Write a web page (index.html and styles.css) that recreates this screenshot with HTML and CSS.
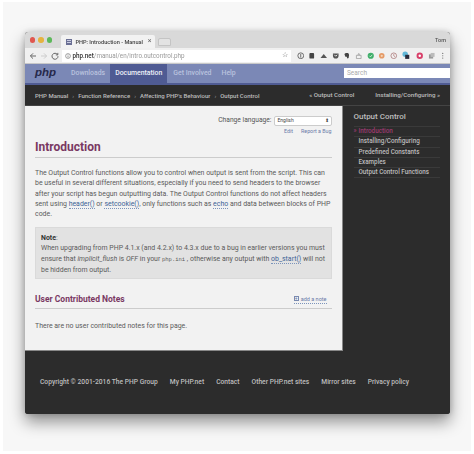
FILE: index.html
```html
<!DOCTYPE html>
<html lang="en">
<head>
<meta charset="utf-8">
<title>PHP: Introduction - Manual</title>
<link rel="stylesheet" href="styles.css">
</head>
<body>
<div class="window">
  <div class="titlebar">
    <div class="lights"><span class="light red"></span><span class="light amber"></span><span class="light green"></span></div>
    <div class="tab">
      <svg class="favicon" viewBox="0 0 6 6"><rect width="6" height="6" fill="#6a6f94"/><rect x="1" y="1" width="4" height="1" fill="#c9cce0"/><rect x="1" y="3" width="4" height="1" fill="#c9cce0"/></svg>
      <span class="tab-title">PHP: Introduction - Manual</span>
      <span class="tab-close">×</span>
    </div>
    <div class="newtab"></div>
    <span class="user">Tom</span>
  </div>
  <div class="toolbar">
    <svg class="nav-ico" viewBox="0 0 8 8"><path d="M7 4H1.5M4 1.4 1.4 4 4 6.6" fill="none" stroke="#666" stroke-width="1"/></svg>
    <svg class="nav-ico" viewBox="0 0 8 8"><path d="M1 4h5.5M4 1.4 6.6 4 4 6.6" fill="none" stroke="#ccc" stroke-width="1"/></svg>
    <svg class="nav-ico" viewBox="0 0 8 8"><path d="M6.5 2.6A3 3 0 1 0 7 4.2M6.8 .9v2H4.8" fill="none" stroke="#666" stroke-width="1"/></svg>
    <div class="address">
      <svg class="info" viewBox="0 0 8 8"><circle cx="4" cy="4" r="3.2" fill="none" stroke="#666" stroke-width=".8"/><path d="M4 3.4v2.6M4 2v.8" stroke="#666" stroke-width=".9"/></svg>
      <span class="url"><b>php.net</b>/manual/en/intro.outcontrol.php</span>
      <span class="star">☆</span>
    </div>
    <div class="exts">
      <svg class="ext" viewBox="0 0 8 8"><circle cx="4" cy="4" r="3.1" fill="none" stroke="#666"/><rect x="3.5" y="2" width="1" height="4" fill="#666"/></svg>
      <svg class="ext" viewBox="0 0 8 8"><rect x="1.5" y="1" width="5" height="6" rx="1" fill="#444"/></svg>
      <svg class="ext" viewBox="0 0 8 8"><path d="M.5 6.5 4 2l3.500 4.500z" fill="#555"/></svg>
      <svg class="ext" viewBox="0 0 8 8"><path d="M1 1.500h6v2.500a3 3 0 0 1-6 0z" fill="#555"/><path d="M2.500 3 4 4.500 5.500 3" stroke="#eee" fill="none"/></svg>
      <svg class="ext" viewBox="0 0 8 8"><path d="M1.500 2 3 1h2.500l1 2-.5 3.500-1.500.5L4 5H2.500z" fill="#444"/></svg>
      <svg class="ext" viewBox="0 0 8 8"><path d="M1.500 3.500h5V7h-5zM3 3.500 4 1.500l1 2" fill="none" stroke="#999" stroke-width=".8"/></svg>
      <svg class="ext" viewBox="0 0 8 8"><circle cx="4" cy="4" r="3.300" fill="#3fae6a"/><path d="M2.500 4 3.700 5.200 5.500 3" stroke="#fff" fill="none" stroke-width=".7"/></svg>
      <svg class="ext" viewBox="0 0 8 8"><circle cx="4" cy="4" r="3" fill="#e59a66"/><circle cx="4" cy="4" r="1.200" fill="#f4d5b8"/></svg>
      <svg class="ext" viewBox="0 0 8 8"><circle cx="4" cy="4" r="3" fill="none" stroke="#b58a8a"/><path d="M4 2.200V4l1.300 1" stroke="#a66" fill="none" stroke-width=".7"/></svg>
      <svg class="ext ext-over" viewBox="0 0 11 9"><circle cx="3.500" cy="3.500" r="3" fill="#62b8d8"/><rect x="3.500" y="4" width="4.500" height="4.500" fill="#2a2a3a"/></svg>
      <svg class="ext" viewBox="0 0 8 8"><circle cx="4" cy="4" r="3.400" fill="#d8406a"/><circle cx="4" cy="4" r="1.300" fill="#fff"/></svg>
      <svg class="ext" viewBox="0 0 8 8"><rect x="1" y="2.500" width="4.500" height="4.500" fill="#999"/><rect x="2.800" y="1" width="4.200" height="4.200" fill="#bbb"/></svg>
      <svg class="ext" viewBox="0 0 8 8"><circle cx="4" cy="1.500" r=".6" fill="#666"/><circle cx="4" cy="4" r=".6" fill="#666"/><circle cx="4" cy="6.500" r=".6" fill="#666"/></svg>
    </div>
  </div>
  <nav class="mainnav">
    <span class="logo">php</span>
    <a class="navlink">Downloads</a>
    <a class="navlink active">Documentation</a>
    <a class="navlink">Get Involved</a>
    <a class="navlink">Help</a>
    <div class="search">Search</div>
  </nav>
  <div class="crumbs">
    <span>PHP Manual</span><i>›</i><span>Function Reference</span><i>›</i><span>Affecting PHP's Behaviour</span><i>›</i><span>Output Control</span>
    <span class="prev">« Output Control</span>
    <span class="next">Installing/Configuring »</span>
  </div>
  <div class="body">
    <main class="content">
      <div class="lang">
        <span>Change language:</span>
        <div class="select"><span>English</span><span class="arrows">⬍</span></div>
      </div>
      <div class="edit"><a>Edit</a><a>Report a Bug</a></div>
      <h1>Introduction</h1>
      <p class="para">The Output Control functions allow you to control when output is sent from the script. This can be useful in several different situations, especially if you need to send headers to the browser after your script has begun outputting data. The Output Control functions do not affect headers sent using <a>header()</a> or <a>setcookie()</a>, only functions such as <a>echo</a> and data between blocks of PHP code.</p>
      <div class="note">
        <strong>Note</strong>:<br>
        When upgrading from PHP 4.1.x (and 4.2.x) to 4.3.x due to a bug in earlier versions you must ensure that <em>implicit_flush</em> is <em>OFF</em> in your <code>php.ini</code> , otherwise any output with <a>ob_start()</a> will not be hidden from output.
      </div>
      <div class="notes-head">
        <h2>User Contributed Notes</h2>
        <a class="add"><span class="plus">+</span>add a note</a>
      </div>
      <p class="none">There are no user contributed notes for this page.</p>
    </main>
    <aside class="side">
      <h3>Output Control</h3>
      <ul>
        <li class="current">Introduction</li>
        <li>Installing/Configuring</li>
        <li>Predefined Constants</li>
        <li>Examples</li>
        <li>Output Control Functions</li>
      </ul>
    </aside>
  </div>
  <footer class="foot">
    <span>Copyright © 2001-2016 The PHP Group</span>
    <span>My PHP.net</span>
    <span>Contact</span>
    <span>Other PHP.net sites</span>
    <span>Mirror sites</span>
    <span>Privacy policy</span>
  </footer>
</div>
</body>
</html>
```
FILE: styles.css
```css
* { box-sizing: border-box; }
html { background: #fff; }
body {
  margin: 2px 3px 3px;
  height: 449px;
  padding: 30px 24px 0 21.5px;
  background: #f7f7f7;
  font-family: Roboto, "Liberation Sans", sans-serif;
  overflow: hidden;
}
.window {
  width: 425.5px;
  height: 382px;
  display: flex;
  flex-direction: column;
  background: #2c2c2c;
  border-radius: 3px;
  overflow: hidden;
  box-shadow: 0 8px 16px rgba(0,0,0,.42), 0 0 6px rgba(0,0,0,.18);
  filter: blur(.45px);
}
.titlebar {
  height: 16px;
  flex: none;
  display: flex;
  align-items: flex-end;
  background: #d9d9d9;
  position: relative;
  padding-left: 5px;
}
.lights { display: flex; gap: 3.200px; align-self: center; }
.light { width: 5.500px; height: 5.500px; border-radius: 50%; }
.red { background: #e0574f; }
.amber { background: #e5b33f; }
.green { background: #5cb85a; }
.tab {
  margin-left: 9px;
  width: 94px;
  height: 13px;
  background: #f2f2f2;
  display: flex;
  align-items: center;
  gap: 3px;
  padding: 0 4px 0 5px;
  border-radius: 2px 2px 0 0;
}
.favicon { width: 6px; height: 6px; flex: none; }
.tab-title { font-size: 5.600px; font-weight: 500; color: #444; white-space: nowrap; }
.tab-close { margin-left: auto; font-size: 7px; color: #666; line-height: 1; }
.newtab {
  width: 13px;
  height: 8px;
  margin: 0 0 2px 3px;
  background: #e3e3e3;
  border: 1px solid #c4c4c4;
  border-radius: 2px 2px 0 0;
}
.user { margin: 0 4px 5px auto; font-size: 5.500px; font-weight: 500; color: #555; }
.toolbar {
  height: 16px;
  flex: none;
  display: flex;
  align-items: center;
  background: #f0f0f0;
  border-bottom: 1px solid #c8c8c8;
  padding: 0 5px 0 4px;
  gap: 3px;
}
.nav-ico { width: 8px; height: 8px; flex: none; }
.address {
  width: 229px;
  height: 12px;
  background: #fff;
  display: flex;
  align-items: center;
  gap: 2px;
  padding: 0 3px;
  flex: none;
}
.info { width: 6px; height: 6px; flex: none; }
.url { font-size: 6.300px; color: #999; white-space: nowrap; }
.url b { color: #333; font-weight: 500; }
.star { margin-left: auto; font-size: 7px; color: #555; line-height: 1; }
.exts { display: flex; align-items: center; gap: 4.200px; margin-left: 3px; }
.ext { width: 7.500px; height: 7.500px; flex: none; }
.ext-over { width: 10px; height: 8.500px; }
.mainnav {
  height: 21px;
  flex: none;
  display: flex;
  align-items: stretch;
  background: #7b88b6;
  border-bottom: 2px solid #4f5b93;
  padding-left: 10.500px;
  font-size: 6.900px;
  font-weight: 500;
  position: relative;
}
.logo {
  font-family: "Liberation Sans", sans-serif;
  font-size: 11.500px;
  font-weight: 700;
  font-style: italic;
  color: #26284a;
  width: 31px;
  line-height: 17px;
}
.navlink { color: #b9c2de; padding: 0 5px; line-height: 19px; white-space: nowrap; }
.navlink.active { background: #4f5b93; color: #eef0f8; }
.navlink:nth-of-type(3) { margin-left: 1px; }
.search {
  position: absolute;
  right: 0;
  top: 4px;
  width: 106px;
  height: 10px;
  background: #fff;
  color: #aaa;
  font-size: 6.500px;
  font-weight: 400;
  line-height: 10px;
  padding-left: 3px;
}
.crumbs {
  height: 21px;
  flex: none;
  display: flex;
  align-items: center;
  padding: 0 10px 0 10.500px;
  background: #2c2c2c;
  color: #bdbdbd;
  font-size: 6px;
  font-weight: 500;
  white-space: nowrap;
  border-bottom: 1px solid #444;
}
.crumbs i { font-style: normal; color: #888; margin: 0 4px; }
.prev { margin-left: auto; font-size: 6.200px; }
.next { margin-left: 21px; font-size: 6.200px; }
.body { flex: none; display: flex; height: 245px; }
.content {
  width: 318px;
  flex: none;
  height: 245px;
  background: #f2f2f2;
  border-right: 1px solid #888;
  border-bottom: 1px solid #888;
  padding: 9px 10px 0 10.500px;
  color: #5a5a5a;
  font-size: 6.950px;
  line-height: 10.300px;
}
.lang { display: flex; justify-content: flex-end; align-items: center; gap: 2px; font-size: 6.700px; color: #555; height: 11px; }
.select {
  width: 58px;
  height: 10px;
  background: #fff;
  border: 1px solid #ccc;
  border-radius: 2px;
  display: flex;
  justify-content: space-between;
  align-items: center;
  padding: 0 2px 0 3px;
  font-size: 5px;
  color: #444;
}
.arrows { font-size: 5px; }
.edit { display: flex; justify-content: flex-end; gap: 8px; font-size: 5.300px; line-height: 9px; margin-top: 1px; }
.edit a { color: #6a7aa8; }
h1 {
  margin: 3px 0 0;
  font-size: 12px;
  line-height: 16px;
  font-weight: 700;
  color: #793862;
  border-bottom: 1px solid #ccc;
  padding-bottom: 2px;
}
.para { margin: 10px 0 0; height: 52px; }
.para a, .note a { color: #3d6296; border-bottom: 1px dotted #7c94bb; }
.note {
  margin-top: 7px;
  height: 52px;
  background: #e2e2e2;
  border: 1px solid #dadada;
  padding: 5px 0 0 5px;
}
.note strong { color: #333; font-weight: 700; }
.note code { font-family: "Liberation Mono", monospace; font-size: 5.500px; }
.notes-head {
  margin-top: 12px;
  height: 18px;
  display: flex;
  justify-content: space-between;
  align-items: center;
  border-bottom: 1px solid #ccc;
  padding-right: 5px;
}
h2 { margin: 0; font-size: 8.500px; font-weight: 700; color: #793862; }
.add { font-size: 5.500px; color: #6a7aa8; border-bottom: 1px dotted #7c94bb; line-height: 7px; display: flex; gap: 2px; }
.plus { width: 5px; height: 5px; border: 1px solid #7a8ab0; font-size: 5px; line-height: 3px; text-align: center; }
.none { margin: 12px 0 0; }
.side { flex: 1; padding: 5px 10px 0 11px; background: #2c2c2c; color: #bdbdbd; }
h3 { margin: 0; font-size: 8px; line-height: 11px; font-weight: 500; color: #bdbdbd; padding-bottom: 4px; border-bottom: 1px solid #3a3a3a; }
ul { list-style: none; margin: 0; padding: 0; }
li {
  font-size: 6.300px;
  font-weight: 500;
  line-height: 9.300px;
  height: 10.300px;
  padding-left: 5px;
  border-bottom: 1px solid #3a3a3a;
}
li.current { color: #9c3a70; position: relative; }
li.current::before { content: "»"; position: absolute; left: 0; }
.foot {
  flex: 1;
  display: flex;
  align-items: flex-start;
  gap: 12px;
  padding: 27px 0 0 15.500px;
  background: #2c2c2c;
  color: #bdbdbd;
  font-size: 6.700px;
  font-weight: 500;
  white-space: nowrap;
}
```
